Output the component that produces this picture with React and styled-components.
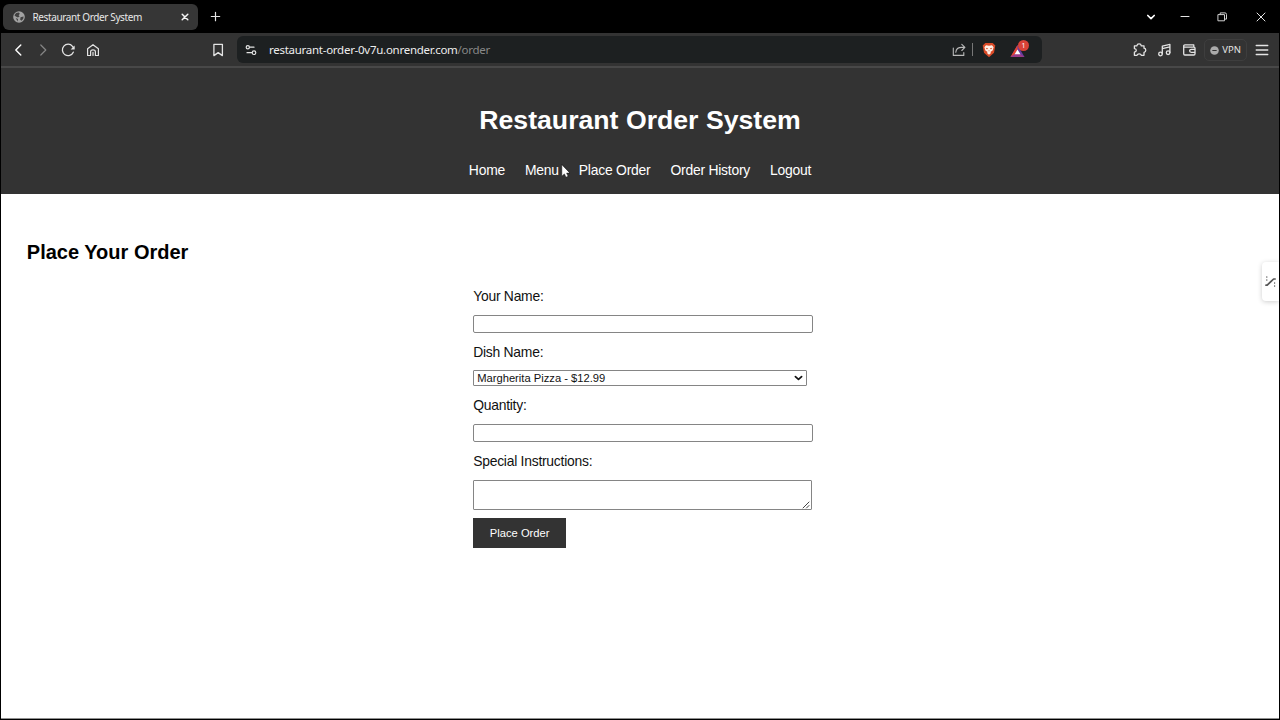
import React from "react";
import styled, { createGlobalStyle } from "styled-components";

const GlobalStyle = createGlobalStyle`
  * { box-sizing: border-box; }
  html, body { margin: 0; padding: 0; background: #000; }
  body { font-family: "Liberation Sans", Arial, sans-serif; overflow: hidden; }
  svg { display: block; flex: none; }
`;

const ui = `"Noto Sans", "Open Sans", sans-serif`;

const Window = styled.div`
  position: relative;
  display: flex;
  flex-direction: column;
  width: 1280px;
  height: 720px;
  padding: 0 1px 1px;
  background: #000;
  overflow: hidden;
`;

const TabStrip = styled.div`
  display: flex;
  align-items: center;
  flex: none;
  height: 33px;
  padding-left: 2px;
`;

const Tab = styled.div`
  display: flex;
  align-items: center;
  width: 195px;
  height: 26px;
  padding: 0 9px 0 10px;
  border-radius: 6px;
  background: #363636;
`;

const TabTitle = styled.span`
  flex: 1;
  margin-left: 7.5px;
  font: 10px/14px ${ui};
  letter-spacing: -0.38px;
  white-space: nowrap;
  color: #e8e8e8;
`;

const NewTab = styled.div`
  margin-left: 12px;
`;

const WindowControls = styled.div`
  display: grid;
  grid-template-columns: 34px 37px 39px 12px;
  align-items: center;
  margin-left: auto;
  padding-right: 12px;
`;

const Toolbar = styled.div`
  display: flex;
  align-items: center;
  flex: none;
  height: 35px;
  padding: 0 10px;
  background: #333;
  border-bottom: 2px solid #484848;
`;

const NavButtons = styled.div`
  display: flex;
  align-items: center;
  gap: 11px;
`;

const BookmarkSlot = styled.div`
  margin-left: 111px;
`;

const AddressBar = styled.div`
  display: flex;
  align-items: center;
  width: 805px;
  height: 27px;
  margin-left: 12px;
  padding: 0 13px 0 8px;
  border-radius: 6px;
  background: #1d2021;
`;

const Url = styled.span`
  flex: 1;
  margin-left: 12px;
  font: 11.5px/16px ${ui};
  letter-spacing: -0.27px;
  white-space: nowrap;
  color: #ededed;
`;

const UrlPath = styled.span`
  color: #888;
`;

const Divider = styled.span`
  width: 1px;
  height: 13px;
  margin: 0 9px 0 6px;
  background: #777;
`;

const ShieldSlot = styled.div`
  margin-right: 14px;
`;

const Rewards = styled.div`
  position: relative;
  width: 19px;
  height: 20px;
  padding-top: 4px;
`;

const Badge = styled.span`
  position: absolute;
  top: 0;
  right: 0;
  width: 11px;
  height: 11px;
  border-radius: 50%;
  background: #d84238;
  color: #fff;
  font: 7px/11px ${ui};
  text-align: center;
`;

const Extensions = styled.div`
  display: flex;
  align-items: center;
  gap: 11px;
  margin-left: auto;
`;

const Vpn = styled.div`
  display: flex;
  align-items: center;
  gap: 3px;
  height: 22px;
  margin: 1px -3px 0 -4px;
  padding: 0 5px;
  border: 1px solid #3e3e3e;
  border-radius: 5px;
  color: #e3e3e3;
  font: 9.5px/12px ${ui};
`;

const Viewport = styled.div`
  display: flex;
  flex-direction: column;
  flex: 1;
  background: #fff;
  border-bottom: 1px solid #909090;
`;

const Header = styled.header`
  display: flex;
  flex-direction: column;
  align-items: center;
  flex: none;
  height: 126px;
  padding-top: 35px;
  background: #333;
  color: #fff;
`;

const Title = styled.h1`
  margin: 0;
  font-size: 26.67px;
  line-height: 34px;
`;

const Menu = styled.nav`
  display: flex;
  gap: 20px;
  margin-top: 25px;
`;

const MenuLink = styled.a`
  font-size: 13.9px;
  line-height: 16px;
  letter-spacing: -0.23px;
  color: #fff;
`;

const Main = styled.main`
  padding: 46px 26px 0 25.8px;
`;

const Heading = styled.h2`
  margin: 0;
  font-size: 20px;
  line-height: 24px;
  color: #000;
`;

const Form = styled.form`
  display: flex;
  flex-direction: column;
  align-items: flex-start;
  width: 340px;
  margin: 24px 0 0 446.4px;
`;

const Label = styled.label`
  margin-bottom: ${(p) => p.$gap || 11}px;
  font-size: 13.9px;
  line-height: 16px;
  letter-spacing: -0.25px;
  color: #111;
`;

const TextInput = styled.input`
  width: 340px;
  height: 18px;
  margin: 0 0 11px;
  padding: 1px 3px;
  border: 1px solid #858585;
  border-radius: 2px;
  background: #fff;
  outline: none;
`;

const DishSelect = styled.div`
  display: flex;
  align-items: center;
  justify-content: space-between;
  width: 334px;
  height: 16px;
  margin-bottom: 11px;
  padding: 0 3px;
  border: 1px solid #858585;
  border-radius: 1px;
  font-size: 11.2px;
  line-height: 14px;
  color: #111;
`;

const NotesBox = styled.div`
  display: flex;
  align-items: flex-end;
  justify-content: flex-end;
  width: 339px;
  height: 30px;
  margin-bottom: 8px;
  padding: 0 1px 0 0;
  border: 1px solid #858585;
  border-radius: 1px;
`;

const Submit = styled.button`
  width: 93px;
  height: 30px;
  padding: 0;
  border: 0;
  background: #333;
  color: #fff;
  font: 11.2px/14px "Liberation Sans", Arial, sans-serif;
`;

const SidePanel = styled.div`
  position: absolute;
  top: 262px;
  right: 1px;
  display: flex;
  align-items: center;
  justify-content: flex-end;
  width: 17px;
  height: 39px;
  padding-right: 3px;
  border-radius: 4px 0 0 4px;
  background: #fff;
  box-shadow: 0 1px 5px rgba(0, 0, 0, 0.2);
`;

const Pointer = styled.div`
  position: absolute;
  left: 561px;
  top: 164px;
`;

const Icon = ({ w = 14, h = w, color = "#e4e4e4", sw = 1.2, children }) => (
  <svg width={w} height={h} viewBox={`0 0 ${w} ${h}`} fill="none" stroke={color}
    strokeWidth={sw} strokeLinecap="round" strokeLinejoin="round">
    {children}
  </svg>
);

export default function App() {
  return (
    <>
      <GlobalStyle />
      <Window>
        <TabStrip>
          <Tab>
            <Icon w={12} color="none">
              <circle cx="6" cy="6" r="5.8" fill="#a2a2a2" />
              <path d="M1.4 4.2 3.2 2.1 5.8 1.5 6.8 2.8 5.6 4.2 6.6 5.4 4.9 6.4 2.8 5.6ZM7.5 6.2 10.6 5.5 10.3 7.8 8.5 9.8 7.2 8.8ZM2.7 7.1 5 8 4.7 10.4Z" fill="#414141" />
            </Icon>
            <TabTitle>Restaurant Order System</TabTitle>
            <Icon w={8} sw={1.5} color="#f4f4f4"><path d="M1.2 1.2 6.8 6.8M6.8 1.2 1.2 6.8" /></Icon>
          </Tab>
          <NewTab><Icon w={11}><path d="M5.5 1.3V9.7M1.3 5.5H9.7" /></Icon></NewTab>
          <WindowControls>
            <Icon w={12} sw={1.7} color="#fff"><path d="M2.8 4.5 6 7.6 9.2 4.5" /></Icon>
            <Icon w={12} sw={1}><path d="M2 5.5H10" /></Icon>
            <Icon w={12} sw={1} color="#cfcfcf"><path d="M2.3 3.6H8.5V9.8H2.3ZM4.2 3.4V1.9H9Q10.5 1.9 10.5 3.4V8.1H8.8" /></Icon>
            <Icon w={12} sw={1}><path d="M2 2 10 10M10 2 2 10" /></Icon>
          </WindowControls>
        </TabStrip>

        <Toolbar>
          <NavButtons>
            <Icon sw={1.4} color="#fff"><path d="M9.8 2 4.8 7 9.8 12" /></Icon>
            <Icon color="#858585"><path d="M4.8 2 9.8 7 4.8 12" /></Icon>
            <Icon sw={1.3}><path d="M12.3 9.2A5.7 5.7 0 1 1 11.5 3.3L12.8 5" /><path d="M13.6 2.4V6.4H9.6Z" fill="#e4e4e4" stroke="none" /></Icon>
            <Icon sw={1.2}><path d="M1.6 5.7 7 1.7 12.4 5.7V12.5H9.4V8.8Q9.4 6.9 7 6.9T4.6 8.8V12.5H1.6ZM7 9.4V12.5" /></Icon>
          </NavButtons>
          <BookmarkSlot><Icon w={14} sw={1.3}><path d="M2.9 1.3H11.4V12.6L7.15 9.6 2.9 12.6Z" /></Icon></BookmarkSlot>
          <AddressBar>
            <Icon w={12} sw={1.2}><circle cx="2.8" cy="3.2" r="1.6" /><path d="M4.7 3.2H9M2 8.7H7" /><circle cx="9" cy="8.7" r="1.8" /></Icon>
            <Url>restaurant-order-0v7u.onrender.com<UrlPath>/order</UrlPath></Url>
            <Icon w={14} color="#b9b9b9" sw={1.1}><path d="M1.3 5V12.4H11.8V9.5M3.8 9.2Q4.2 4.4 9.8 4.4H12.6M9.8 1.3 12.9 4.4 9.8 7.5" /></Icon>
            <Divider />
            <ShieldSlot>
              <Icon w={14} h={16} color="none">
                <path d="M3.3 1H10.7L13.3 3.5 12 10.8 7 15.2 2 10.8 .7 3.5Z" fill="#d94a27" />
                <path d="M4 3.2 7 3.8 10 3.2 11.6 5.2 10.6 8.6 8.4 10.1 9 11.1 7 12.7 5 11.1 5.6 10.1 3.4 8.6 2.4 5.2Z" fill="#fff0e8" />
                <path d="M3.6 5.8 6.1 6.3 5 7.5ZM10.4 5.8 7.9 6.3 9 7.5ZM6.2 8.5H7.8L7 9.6Z" fill="#d94a27" />
              </Icon>
            </ShieldSlot>
            <Rewards>
              <Icon w={15} h={14} color="none">
                <path d="M7.5 1 14.5 13H.5Z" fill="#693aa1" />
                <path d="M7.5 1 .5 13 5 10.3 7.5 5.5Z" fill="#e4432e" />
                <path d="M.5 13H14.5L10.2 10H5Z" fill="#983b87" />
                <path d="M7.5 5.5 10.5 10.3H4.6Z" fill="#fff" />
              </Icon>
              <Badge>1</Badge>
            </Rewards>
          </AddressBar>
          <Extensions>
            <Icon sw={1.3}><path d="M1.4 2.8H3.8Q4.2.9 6.1.9T8.3 2.8H11V5.2Q12.8 5.5 12.8 7.2T11 9.3V12.3H8.3Q7.9 10.9 6.2 10.9T4 12.3H1.4V9.2Q3.3 8.9 3.3 7.3T1.4 5.6Z" /></Icon>
            <Icon sw={1.3}><path d="M4.3 10.8V3.1L11.9 1.4V9.5M4.3 5.6 11.9 3.9" /><circle cx="2.5" cy="11" r="1.8" /><circle cx="10.1" cy="9.7" r="1.8" /></Icon>
            <Icon sw={1.3}><path d="M10.8 4V1.9H1.9Q.7 1.9 .7 3.1V10.8Q.7 12 1.9 12H10.8Q12 12 12 10.8V5Q12 4.1 10.8 4.1H1.5M12.2 6.3H8.4Q6.6 6.3 6.6 7.8T8.4 9.3H12.2" /></Icon>
            <Vpn>
              <Icon w={9} color="#333"><circle cx="4.5" cy="4.5" r="4.3" fill="#aaa" stroke="none" /><path d="M2.8 4.5H6.2" /></Icon>
              VPN
            </Vpn>
            <Icon w={14} sw={1.3}><path d="M1.2 2.5H12.8M1.2 7H12.8M1.2 11.5H12.8" /></Icon>
          </Extensions>
        </Toolbar>

        <Viewport>
          <Header>
            <Title>Restaurant Order System</Title>
            <Menu>
              {["Home", "Menu", "Place Order", "Order History", "Logout"].map((item) => (
                <MenuLink key={item}>{item}</MenuLink>
              ))}
            </Menu>
          </Header>
          <Main>
            <Heading>Place Your Order</Heading>
            <Form onSubmit={(e) => e.preventDefault()}>
              <Label htmlFor="name">Your Name:</Label>
              <TextInput id="name" />
              <Label $gap={10}>Dish Name:</Label>
              <DishSelect>
                Margherita Pizza - $12.99
                <Icon w={9} h={8} color="#111" sw={1.7}><path d="M1.4 2.6 4.5 5.4 7.6 2.6" /></Icon>
              </DishSelect>
              <Label htmlFor="quantity">Quantity:</Label>
              <TextInput id="quantity" />
              <Label>Special Instructions:</Label>
              <NotesBox>
                <Icon w={8} color="#444" sw={1}><path d="M1 7 7 1M4.5 7 7 4.5" /></Icon>
              </NotesBox>
              <Submit type="submit">Place Order</Submit>
            </Form>
          </Main>
        </Viewport>

        <SidePanel>
          <Icon w={11} h={14} color="#555" sw={1.7}>
            <path d="M1 10.2H2.2L8.6 4H10.2" />
            <path d="M1.8 1.5V7M9.6 7.5V13" strokeDasharray="1 2" strokeWidth="1.2" stroke="#888" />
          </Icon>
        </SidePanel>
        <Pointer>
          <Icon w={9} h={14} color="#111" sw={0.5}>
            <path d="M.8 .8V12.2L3.4 9.9 5 13.3 7.1 12.3 5.6 9.1H8.7Z" fill="#fff" />
          </Icon>
        </Pointer>
      </Window>
    </>
  );
}
